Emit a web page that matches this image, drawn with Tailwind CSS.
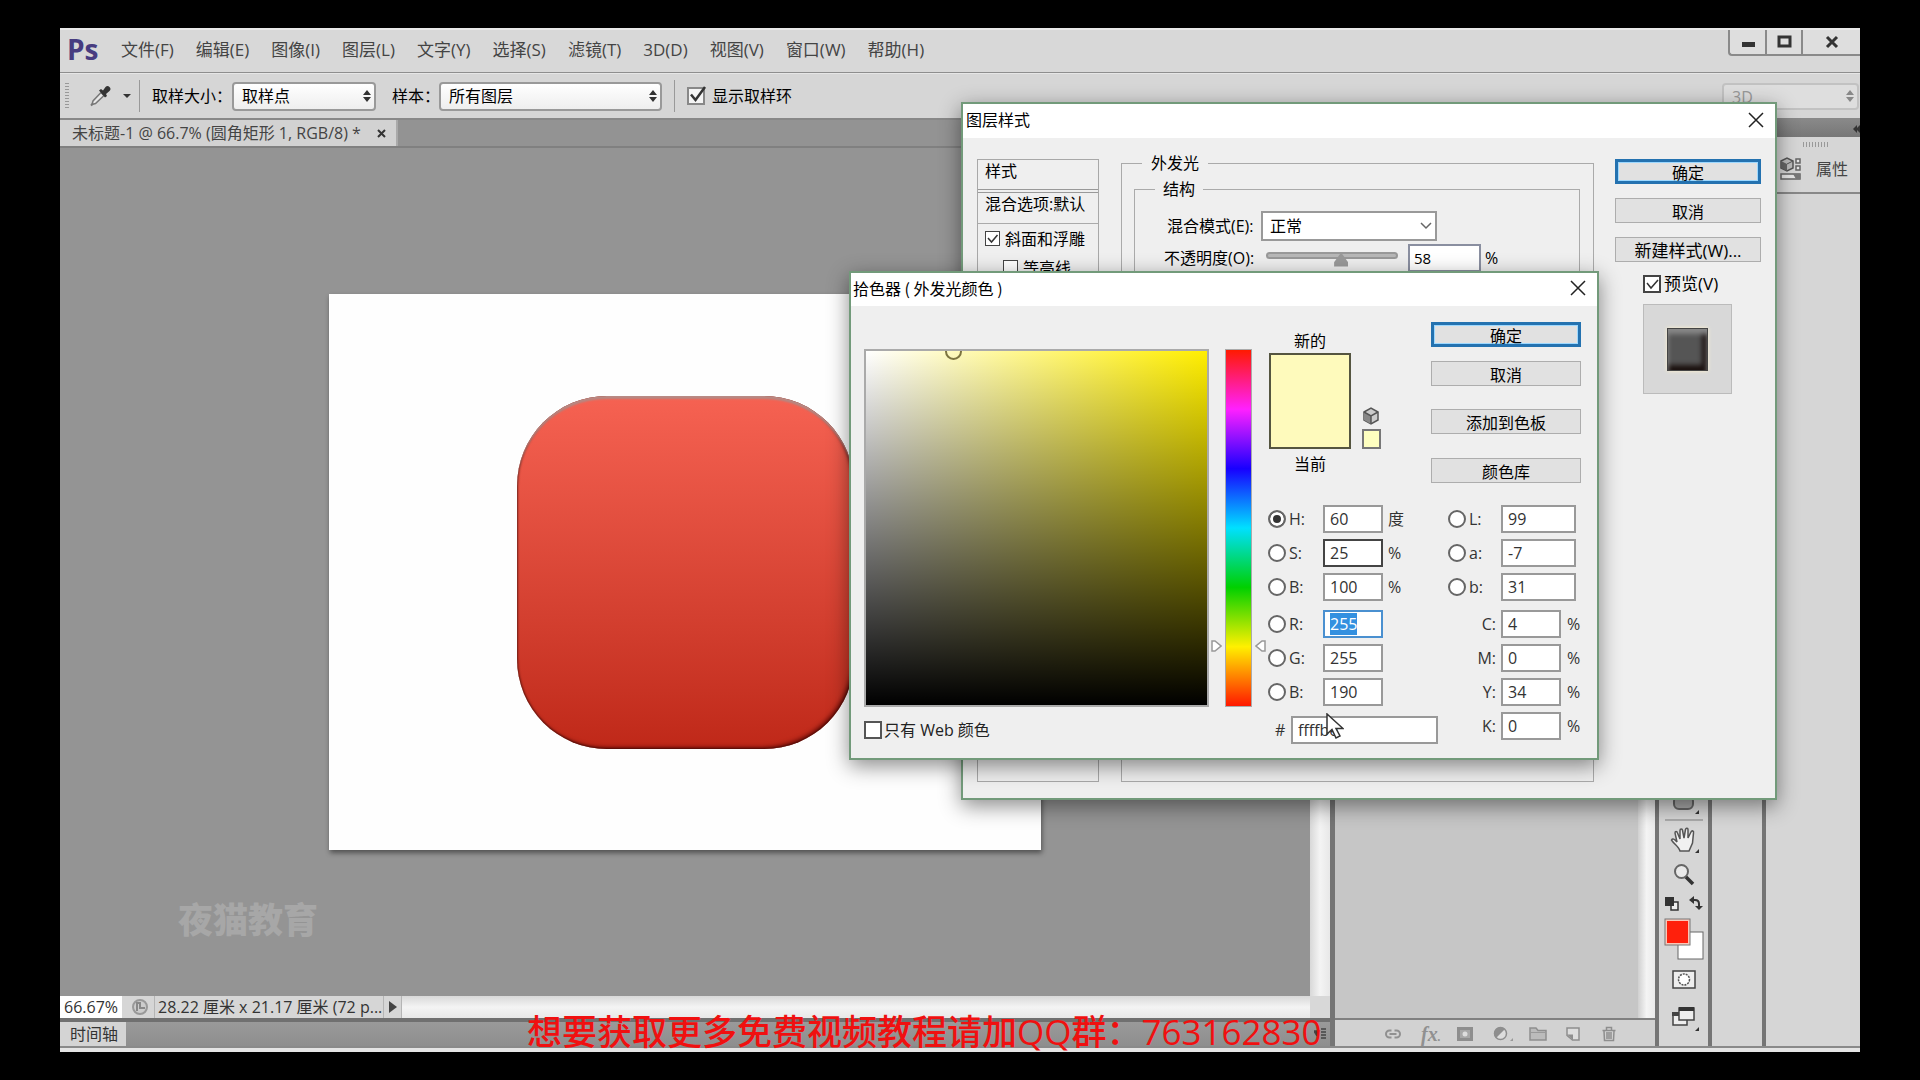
<!DOCTYPE html>
<html lang="zh-CN">

<head>
  <meta charset="UTF-8" />
  <meta name="viewport" content="width=device-width, initial-scale=1.0" />
  <title>Photoshop - 拾色器</title>
  <script src="https://cdn.jsdelivr.net/npm/@tailwindcss/browser@4"></script>
</head>

<body class="h-screen overflow-hidden bg-black px-[60px] py-7 font-['Open_Sans','Noto_Sans_CJK_SC',sans-serif] text-base leading-6 text-[#222]">

  <div class="relative flex h-full flex-col bg-[#d6d6d6]">

    <!-- Menu -->
    <header class="flex h-[45px] items-center border-t-2 border-b border-t-[#e8e8e8] border-b-[#8e8e8e] bg-[#d8d8d8] pl-[7px]">
      <span class="w-[54px] pb-1 text-[28px] leading-8 font-bold text-[#473c80]">Ps</span>
      <nav class="flex flex-1 gap-[22px] pb-[3px] text-[17px] whitespace-nowrap text-[#444]">
        <button>文件(F)</button>
        <button>编辑(E)</button>
        <button>图像(I)</button>
        <button>图层(L)</button>
        <button>文字(Y)</button>
        <button>选择(S)</button>
        <button>滤镜(T)</button>
        <button>3D(D)</button>
        <button>视图(V)</button>
        <button>窗口(W)</button>
        <button>帮助(H)</button>
      </nav>
      <div class="flex h-[26px] self-start rounded-bl border-b-2 border-l-2 border-[#8a8a8a] bg-[#dedede]">
        <button class="grid w-[37px] place-items-center border-r-2 border-[#8a8a8a]" aria-label="最小化">
          <svg class="h-4 w-4" viewBox="0 0 16 16"><rect x="2" y="8" width="13" height="5" fill="#333" /></svg>
        </button>
        <button class="grid w-9 place-items-center border-r-2 border-[#8a8a8a]" aria-label="最大化">
          <svg class="h-4 w-4" viewBox="0 0 16 16"><rect x="3" y="3" width="11" height="9" fill="none" stroke="#333" stroke-width="3" /></svg>
        </button>
        <button class="grid w-[57px] place-items-center" aria-label="关闭">
          <svg class="h-4 w-4" viewBox="0 0 16 16"><path d="M3 3l10 10M13 3L3 13" stroke="#333" stroke-width="3" /></svg>
        </button>
      </div>
    </header>

    <!-- Options bar -->
    <section class="flex h-[47px] items-center border-t border-b-2 border-t-[#e6e6e6] border-b-[#888] bg-[#d6d6d6] pl-[5px] text-black">
      <div class="h-[26px] w-1 bg-[repeating-linear-gradient(to_bottom,#999_0_1px,transparent_1px_3px)]"></div>
      <svg class="ml-5 h-[22px] w-[22px]" viewBox="0 0 22 22">
        <path d="M3 19.500L4 16 12 7.500 15 10.500 6.500 18.500Z" fill="#e8e8e8" stroke="#777" stroke-width="1.500" />
        <path d="M2 20.500l2-2" stroke="#777" stroke-width="2" />
        <path d="M10 5.500l2-1.500 2 1.500L16.500 2q2-2 4 0t0 4L17 9l1 2-2 1.500Z" fill="#333" />
      </svg>
      <svg class="ml-3 h-2 w-2" viewBox="0 0 8 8"><path d="M0 2h8L4 6Z" fill="#333" /></svg>
      <div class="ml-2 h-8 w-px bg-[#999]"></div>
      <label for="size" class="ml-3 w-20">取样大小：</label>
      <span class="grid items-center">
        <select id="size" class="col-start-1 row-start-1 h-[29px] w-[144px] appearance-none rounded border-2 border-[#999] bg-linear-to-b from-white to-[#eee] px-2 leading-6">
          <option>取样点</option>
        </select>
        <svg class="pointer-events-none col-start-1 row-start-1 mr-[5px] h-3 w-2 justify-self-end" viewBox="0 0 8 12"><path d="M0 5L4 0l4 5ZM0 7h8l-4 5Z" fill="#333" /></svg>
      </span>
      <label for="sample" class="ml-4 w-[47px] whitespace-nowrap">样本：</label>
      <span class="grid items-center">
        <select id="sample" class="col-start-1 row-start-1 h-[29px] w-[223px] appearance-none rounded border-2 border-[#999] bg-linear-to-b from-white to-[#eee] px-2 leading-6">
          <option>所有图层</option>
        </select>
        <svg class="pointer-events-none col-start-1 row-start-1 mr-[5px] h-3 w-2 justify-self-end" viewBox="0 0 8 12"><path d="M0 5L4 0l4 5ZM0 7h8l-4 5Z" fill="#333" /></svg>
      </span>
      <div class="ml-3 h-8 w-px bg-[#999]"></div>
      <label class="ml-3 flex flex-1 items-center gap-[7px]">
        <span class="grid">
          <input type="checkbox" checked class="col-start-1 row-start-1 h-[18px] w-[18px] appearance-none border-2 border-[#888] bg-[#f4f4f4]" />
          <svg class="pointer-events-none col-start-1 row-start-1 h-[18px] w-[18px] overflow-visible" viewBox="0 0 18 18"><path d="M4 7.500L8.500 13 18 0" fill="none" stroke="#333" stroke-width="2.500" /></svg>
        </span>
        显示取样环
      </label>
      <span class="mr-px grid items-center">
        <select aria-label="工作区" class="col-start-1 row-start-1 h-[27px] w-[137px] appearance-none rounded border-2 border-[#c2c2c2] bg-[#dedede] px-2 leading-6 text-[#999]">
          <option>3D</option>
        </select>
        <svg class="pointer-events-none col-start-1 row-start-1 mr-[5px] h-3 w-2 justify-self-end" viewBox="0 0 8 12"><path d="M0 5L4 0l4 5ZM0 7h8l-4 5Z" fill="#888" /></svg>
      </span>
    </section>

    <!-- Workspace -->
    <main class="flex min-h-0 flex-1">

      <!-- Document -->
      <section class="flex min-w-0 flex-1 flex-col">
        <div class="flex h-7 border-b-2 border-[#808080] bg-[#939393]">
          <div class="flex items-center gap-4 border-r-2 border-[#aaa] bg-[#d2d2d2] pr-[10px] pl-3 text-[#444]">
            <span class="whitespace-nowrap">未标题-1 @ 66.7% (圆角矩形 1, RGB/8) *</span>
            <button aria-label="关闭文档">
              <svg class="h-[9px] w-[9px]" viewBox="0 0 9 9"><path d="M1 1l7 7M8 1L1 8" stroke="#333" stroke-width="2" /></svg>
            </button>
          </div>
        </div>

        <div class="flex min-h-0 flex-1">
          <div class="relative flex flex-1 items-center justify-center bg-[#949494]">
            <div class="flex h-[556px] w-[712px] items-center justify-center bg-[#fefefe] shadow-[1px_3px_5px_rgba(0,0,0,0.45)]">
              <div class="h-[353px] w-[337px] rounded-[90px] bg-linear-to-b from-[#f66252] to-[#bf2818] shadow-[inset_0_4px_2px_-1px_#b98a84,inset_0_0_2px_1px_rgba(60,10,5,0.7),inset_-3px_-3px_4px_-1px_rgba(70,0,0,0.6)]"></div>
            </div>
            <span class="absolute bottom-[48px] left-[118px] text-[35px] leading-[56px] font-black text-[#a7a7a7]">夜猫教育</span>
          </div>
          <div class="w-5 bg-linear-to-r from-[#d8d8d8] via-[#f4f4f4] to-[#e8e8e8]"></div>
        </div>

        <!-- Status bar -->
        <div class="flex h-[22px] items-center bg-[#d6d6d6] text-[15px] leading-[22px] whitespace-nowrap text-[#333]">
          <input aria-label="缩放" value="66.67%" class="h-full w-[62px] bg-white px-1 text-base" />
          <svg class="mr-[6px] ml-[10px] h-4 w-4" viewBox="0 0 16 16">
            <circle cx="8" cy="8" r="7" fill="#ccc" stroke="#999" stroke-width="2" />
            <path d="M5 12V4h3v5h5" fill="none" stroke="#888" stroke-width="2" />
          </svg>
          <span class="w-[230px] overflow-hidden border-r border-l border-[#b5b5b5] pl-[3px] text-base leading-[22px]">28.22 厘米 x 21.17 厘米 (72 p...</span>
          <button class="grid h-full w-[18px] place-items-center border-r border-[#b5b5b5]" aria-label="状态选项">
            <svg class="h-3 w-2" viewBox="0 0 8 12"><path d="M0 0l8 6-8 6Z" fill="#444" /></svg>
          </button>
          <div class="h-full flex-1 bg-linear-to-b from-[#d8d8d8] via-[#f4f4f4] to-[#e8e8e8]"></div>
          <div class="h-full w-5 bg-[#d8d8d8]"></div>
        </div>

        <!-- Timeline -->
        <div class="flex h-7 items-center border-t-4 border-[#707070] bg-linear-to-b from-[#9a9a9a] to-[#8e8e8e]">
          <div class="flex h-6 w-[66px] items-center bg-[#d4d4d4] pl-[10px] text-[#333]">时间轴</div>
          <svg class="mr-1 ml-auto h-3 w-3" viewBox="0 0 12 12"><path d="M0 3h5L2.500 7ZM7 1h5M7 4h5M7 7h5M7 10h5" fill="#444" stroke="#444" stroke-width="1.500" /></svg>
        </div>
      </section>

      <div class="w-[5px] bg-[#757575]"></div>

      <!-- Layers -->
      <section class="flex w-[320px] flex-col">
        <div class="flex flex-1">
          <div class="flex-1 bg-[#c6c6c6]"></div>
          <div class="w-[17px] bg-linear-to-r from-[#d0d0d0] via-[#f4f4f4] to-[#eaeaea]"></div>
        </div>
        <div class="flex h-7 items-center border-t-2 border-[#808080] bg-[#d2d2d2] pt-[2px] pl-[49px] text-[#909090]">
          <button class="w-[37px]" aria-label="链接图层">
            <svg class="h-4 w-[18px]" viewBox="0 0 17 16" fill="none" stroke="currentColor" stroke-width="2"><path d="M7 4.500H5a3.500 3.500 0 000 7h2M10 4.500h2a3.500 3.500 0 010 7h-2M5 8h7" /></svg>
          </button>
          <button class="w-9 text-left font-['Liberation_Serif',serif] text-[20px] leading-5 font-bold italic" aria-label="图层样式">fx<span class="text-xs">.</span></button>
          <button class="w-9" aria-label="图层蒙版">
            <svg class="h-4 w-4" viewBox="0 0 16 16"><rect x="0" y="1" width="16" height="14" fill="#8e8e8e" /><rect x="3" y="4" width="10" height="8" fill="#a8a8a8" /><circle cx="8" cy="8" r="2.500" fill="#ddd" /></svg>
          </button>
          <button class="w-9" aria-label="调整图层">
            <svg class="h-4 w-[20px]" viewBox="0 0 20 16"><circle cx="7.500" cy="7.500" r="6" fill="#ddd" stroke="#8e8e8e" stroke-width="1.500" /><path d="M3 12A6 6 0 0112 3Z" fill="#8e8e8e" /><path d="M17 15h3v-3Z" fill="#999" /></svg>
          </button>
          <button class="w-9" aria-label="新建组">
            <svg class="h-4 w-[18px]" viewBox="0 0 18 16"><path d="M1 14V2h6l2 2.500h8V14Z" fill="#bbb" stroke="#8e8e8e" stroke-width="1.500" /><path d="M1.500 6.500h15" stroke="#999" /></svg>
          </button>
          <button class="w-9" aria-label="新建图层">
            <svg class="h-4 w-4" viewBox="0 0 16 16"><path d="M2 2h12v12H7.500L2 9.500Z" fill="#ddd" stroke="#8e8e8e" stroke-width="1.500" /><path d="M2 8.500h6V14Z" fill="#8e8e8e" /></svg>
          </button>
          <button aria-label="删除图层">
            <svg class="h-4 w-4" viewBox="0 0 16 16" fill="none" stroke="#8e8e8e" stroke-width="1.500"><path d="M1.500 4.500h13M5.500 4V1.500h5V4M3 5l.500 9.500h9L13 5M6 6v7M8 6v7M10 6v7" /></svg>
          </button>
        </div>
      </section>

      <div class="w-1 bg-[#757575]"></div>

      <!-- Tools -->
      <aside class="flex w-[49px] flex-col items-center justify-end pb-[14px]">
        <button aria-label="圆角矩形工具">
          <svg class="h-6 w-[32px]" viewBox="0 0 32 24"><rect x="6" y="4" width="19" height="13" rx="5" fill="#aaa" stroke="#666" stroke-width="2" /><path d="M31 18v4h-4Z" fill="#333" /></svg>
        </button>
        <div class="mt-[3px] h-[2px] w-[38px] bg-[#aaa]"></div>
        <button class="mt-[6px]" aria-label="抓手工具">
          <svg class="h-7 w-[32px]" viewBox="0 0 32 28">
            <path d="M12 24c-1-4-6-7-8.500-11 1-2 3-1 5.500 2L7 6c0-2 2-2 2.500 0L12 12 12 3.500c0-2 2.500-2 2.500 0L16 11 17.500 2.500c.500-2 2.500-1.500 2.500 0L20 11 23 5c1-2 3-1 2.500 1L24.500 16 21 24Z" fill="#f1f1f1" stroke="#555" stroke-width="1.500" />
            <path d="M31 22v4h-4Z" fill="#333" />
          </svg>
        </button>
        <button class="mt-2" aria-label="缩放工具">
          <svg class="h-6 w-[22px]" viewBox="0 0 22 24"><circle cx="8.500" cy="8.500" r="6.500" fill="#e9e9e9" stroke="#666" stroke-width="2" /><path d="M13 14l7 7" stroke="#333" stroke-width="3.500" /></svg>
        </button>
        <div class="mt-[9px] flex w-[38px] justify-between">
          <button aria-label="默认颜色">
            <svg class="h-4 w-[14px]" viewBox="0 0 14 16"><rect x="6" y="6" width="7" height="8" fill="#eee" stroke="#333" stroke-width="1.500" /><path d="M0 1h9v9H0Z" fill="#333" /></svg>
          </button>
          <button aria-label="切换颜色">
            <svg class="h-4 w-[14px]" viewBox="0 0 14 16"><path d="M3 4h3q4 0 4 4v3" fill="none" stroke="#333" stroke-width="2" /><path d="M5 0v8L0 4ZM6 10h8l-4 4Z" fill="#333" /></svg>
          </button>
        </div>
        <!-- Foreground / background colour -->
        <button class="mt-[6px]" aria-label="前景色">
          <svg class="h-[42px] w-10" viewBox="0 0 40 42"><rect x="14" y="14" width="25" height="27" fill="#fff" stroke="#666" /><rect x="1" y="1" width="25" height="26" fill="#fbc7b8" stroke="#777" /><rect x="3" y="3" width="21" height="22" fill="#ff200c" /></svg>
        </button>
        <button class="mt-[10px]" aria-label="快速蒙版">
          <svg class="h-[19px] w-[24px]" viewBox="0 0 24 19"><rect x="1" y="1" width="22" height="17" fill="#eee" stroke="#444" stroke-width="1.500" /><circle cx="12" cy="9.500" r="5.500" fill="#fff" stroke="#555" stroke-width="1.500" stroke-dasharray="2 1" /></svg>
        </button>
        <button class="mt-[17px]" aria-label="屏幕模式">
          <svg class="h-[26px] w-[32px]" viewBox="0 0 32 26"><rect x="5" y="7" width="14" height="12" fill="#eee" stroke="#444" stroke-width="1.500" /><path d="M4 6h14v4H4Z" fill="#444" /><rect x="11" y="2" width="15" height="12" fill="#eee" stroke="#444" stroke-width="1.500" /><path d="M11 1h15v4H11Z" fill="#333" /><path d="M31 21v4h-4Z" fill="#333" /></svg>
        </button>
      </aside>

      <div class="w-1 bg-[#757575]"></div>
      <div class="w-[50px]"></div>
      <div class="w-1 bg-[#757575]"></div>

      <!-- Properties -->
      <aside class="w-[94px]">
        <div class="flex h-[17px] items-center justify-end bg-linear-to-b from-[#888] to-[#777]">
          <svg class="h-2 w-[7px]" viewBox="0 0 7 8"><path d="M0 4l4-4v8ZM3 4l4-4v8Z" fill="#333" /></svg>
        </div>
        <div class="flex h-[57px] flex-col border-b-2 border-[#888] pt-[5px]">
          <div class="mr-[30px] h-[5px] w-[27px] self-end bg-[repeating-linear-gradient(to_right,#999_0_1px,transparent_1px_3px)]"></div>
          <button class="mt-[10px] mr-3 flex items-center gap-[14px] self-end text-[#444]">
            <svg class="h-6 w-[22px]" viewBox="0 0 22 24">
              <path d="M1 4l6-3 6 3v7l-6 3-6-3Z" fill="#bbb" stroke="#555" stroke-width="1.500" />
              <path d="M1 4l6 3v7l-6-3Z" fill="#666" /><path d="M7 7l6-3" stroke="#555" />
              <path d="M16 2h4v4h-4ZM16 9h4v4h-4ZM1 17h19v5H1Z" fill="#e6e6e6" stroke="#666" stroke-width="1.500" /><path d="M13 17h7v5h-4Z" fill="#777" />
            </svg>
            属性
          </button>
        </div>
      </aside>
    </main>

    <div class="h-[6px] border-t-2 border-[#8a8a8a] bg-[#e4e4e4]"></div>

    <!-- Layer style window -->
    <section class="absolute top-[74px] left-[901px] flex h-[698px] w-[816px] flex-col border-2 border-[#729a7a] bg-[#efefef] text-black shadow-[0_6px_20px_rgba(0,0,0,0.45)]">
      <div class="flex h-[34px] items-center justify-between bg-white pr-[11px] pb-[2px] pl-[3px]">
        <h2>图层样式</h2>
        <button aria-label="关闭"><svg class="h-4 w-4" viewBox="0 0 16 16"><path d="M1 1l14 14M15 1L1 15" stroke="#222" stroke-width="1.500" /></svg></button>
      </div>
      <div class="flex flex-1 pt-[21px] pr-[14px] pb-4 pl-[14px]">
        <div class="w-[122px] border border-[#a8a8a8]">
          <div class="h-[33px] border-b-4 border-double border-[#999] pl-[7px] leading-[22px]">样式</div>
          <div class="h-[31px] border-b border-[#aaa] pl-[7px] leading-[22px]">混合选项:默认</div>
          <label class="flex h-[29px] items-center gap-[5px] pl-[7px]">
            <span class="grid">
              <input type="checkbox" checked class="col-start-1 row-start-1 h-[15px] w-[15px] appearance-none border border-[#444] bg-white" />
              <svg class="pointer-events-none col-start-1 row-start-1 h-[15px] w-[15px]" viewBox="0 0 15 15"><path d="M3 7l3.500 4L12.500 4" fill="none" stroke="#333" stroke-width="1.500" /></svg>
            </span>
            斜面和浮雕
          </label>
          <label class="flex h-[29px] items-center gap-[5px] pl-[25px]">
            <input type="checkbox" class="h-[15px] w-[15px] appearance-none border border-[#444] bg-white" />
            等高线
          </label>
        </div>
        <fieldset class="mt-[-8px] ml-[22px] w-[473px] border border-[#aaa] pl-3">
          <legend class="ml-2 px-[9px]">外发光</legend>
          <fieldset class="mt-[2px] mr-[13px] h-[500px] border border-[#aaa] pl-[29px]">
            <legend class="ml-[-9px] px-2">结构</legend>
            <div class="mt-[10px] flex items-center">
              <label for="mode" class="w-[97px] pl-[3px]">混合模式(E):</label>
              <span class="grid items-center">
                <select id="mode" class="col-start-1 row-start-1 h-[30px] w-[176px] appearance-none border-2 border-[#999] bg-white px-[7px] leading-6">
                  <option>正常</option>
                </select>
                <svg class="pointer-events-none col-start-1 row-start-1 mr-[5px] h-2 w-3 justify-self-end" viewBox="0 0 12 8"><path d="M1 1l5 5 5-5" fill="none" stroke="#666" stroke-width="1.500" /></svg>
              </span>
            </div>
            <div class="mt-[3px] flex items-center">
              <label for="opacity" class="w-[102px]">不透明度(O):</label>
              <input id="opacity" type="range" min="0" max="100" value="58" class="mb-[5px] h-[7px] w-[132px] appearance-none rounded border-2 border-[#999] bg-[#b8b8b8] [&::-webkit-slider-thumb]:mt-2 [&::-webkit-slider-thumb]:h-[14px] [&::-webkit-slider-thumb]:w-[14px] [&::-webkit-slider-thumb]:appearance-none [&::-webkit-slider-thumb]:bg-[#999] [&::-webkit-slider-thumb]:[clip-path:polygon(50%_0,100%_70%,100%_100%,0_100%,0_70%)]" />
              <input aria-label="不透明度" value="58" class="mr-1 ml-[10px] h-7 w-[73px] border-2 border-[#8a8fa0] bg-white px-1 text-[15px]" />
              %
            </div>
          </fieldset>
        </fieldset>
        <div class="ml-auto flex w-[146px] flex-col">
          <button class="h-[25px] border-[3px] border-[#2472b0] bg-[#e1e1e1] leading-[22px] shadow-[inset_0_0_0_1px_#9cd8ff]">确定</button>
          <button class="mt-[14px] h-[25px] border border-[#adadad] bg-[#e1e1e1] leading-[27px]">取消</button>
          <button class="mt-[14px] h-[25px] border border-[#adadad] bg-[#e1e1e1] text-[17px] leading-[25px]">新建样式(W)...</button>
          <label class="mt-[10px] flex h-6 items-center gap-[3px] pl-7 text-[17px]">
            <span class="grid">
              <input type="checkbox" checked class="col-start-1 row-start-1 h-[18px] w-[18px] appearance-none border-2 border-[#444] bg-white" />
              <svg class="pointer-events-none col-start-1 row-start-1 h-[18px] w-[18px]" viewBox="0 0 18 18"><path d="M4 8l4 5 7-8" fill="none" stroke="#333" stroke-width="1.500" /></svg>
            </span>
            预览(V)
          </label>
          <div class="mt-2 ml-7 grid h-[90px] w-[89px] place-items-center border border-[#bbb] bg-[#d8d8d8]">
            <div class="h-[43px] w-[41px] border border-[#444] bg-[#555] shadow-[inset_0_5px_5px_#888,inset_-5px_-5px_5px_#1c1210,0_0_4px_#fff3cf]"></div>
          </div>
        </div>
      </div>
    </section>

    <!-- Colour picker window -->
    <section class="absolute top-[243px] left-[789px] flex h-[489px] w-[750px] flex-col border-2 border-[#729a7a] bg-[#efefef] text-black shadow-[0_6px_20px_rgba(0,0,0,0.45)]">
      <div class="flex h-[33px] items-center justify-between bg-white pr-[11px] pb-1 pl-[2px]">
        <h2 class="font-['Noto_Sans_CJK_SC',sans-serif]">拾色器 ( 外发光颜色 )</h2>
        <button aria-label="关闭"><svg class="h-4 w-4" viewBox="0 0 16 16"><path d="M1 1l14 14M15 1L1 15" stroke="#222" stroke-width="1.500" /></svg></button>
      </div>

      <div class="flex flex-1 pr-4 pl-[13px]">
        <div class="pt-[43px]">
          <div class="relative h-[358px] w-[345px] overflow-hidden border-2 border-[#aaa] bg-[linear-gradient(to_top,black,transparent),linear-gradient(to_right,white,#ffee00)]">
            <div class="absolute -top-2 left-[79px] h-[17px] w-[17px] rounded-full border-2 border-[#7c7440]"></div>
          </div>
          <label class="mt-[11px] flex items-center gap-[2px] text-[#222]">
            <input type="checkbox" class="h-[18px] w-[18px] appearance-none border-2 border-[#555] bg-white" />
            只有 Web 颜色
          </label>
        </div>

        <div class="ml-4 pt-[43px]">
          <div class="relative h-[358px] w-[27px] border border-[#aaa] bg-[linear-gradient(to_bottom,#ff1a00,#ff20ff,#1800ff,#00e0ff,#00d000,#fff000,#ff1800)]">
            <svg class="absolute top-[290px] -left-[16px] h-3 w-3" viewBox="0 0 12 12"><path d="M2 1h3l6 5-6 5H2Z" fill="#fff" stroke="#999" stroke-width="1.500" /></svg>
            <svg class="absolute top-[290px] -right-[16px] h-3 w-3" viewBox="0 0 12 12"><path d="M10 1H7L1 6l6 5h3Z" fill="#fff" stroke="#999" stroke-width="1.500" /></svg>
          </div>
        </div>

        <div class="ml-4 flex-1 pt-4">
          <div class="flex pl-px">
            <div class="flex w-[82px] flex-col items-center pt-[7px]">
              <span>新的</span>
              <div class="h-[96px] w-[82px] border-2 border-[#555540] bg-[#fefabc]"></div>
              <span class="mt-[3px]">当前</span>
            </div>
            <div class="ml-[11px] pt-[85px]">
              <svg class="h-[18px] w-[18px]" viewBox="0 0 18 18"><path d="M2 5l7-4 7 4v8l-7 4-7-4Z" fill="#ccc" stroke="#555" stroke-width="1.500" /><path d="M2 5l7 4v8l-7-4Z" fill="#888" /><path d="M2 5l7 4 7-4M9 9v8" fill="none" stroke="#555" stroke-width="1.500" /></svg>
              <div class="mt-1 h-5 w-[19px] border-2 border-[#777] bg-[#feffc0]"></div>
            </div>
            <div class="ml-auto flex w-[150px] flex-col">
              <button class="h-[25px] border-[3px] border-[#2472b0] bg-[#e1e1e1] leading-[22px] shadow-[inset_0_0_0_1px_#9cd8ff]">确定</button>
              <button class="mt-[14px] h-[25px] border border-[#adadad] bg-[#e1e1e1] leading-[27px]">取消</button>
              <button class="mt-[23px] h-[25px] border border-[#adadad] bg-[#e1e1e1] leading-[27px]">添加到色板</button>
              <button class="mt-6 h-[25px] border border-[#adadad] bg-[#e1e1e1] leading-[27px]">颜色库</button>
            </div>
          </div>

          <div class="mt-[22px] flex justify-between text-[#333]">
            <div>
              <!-- HSB -->
              <div class="flex flex-col gap-[6px]">
                <div class="flex h-7 items-center">
                  <label class="flex w-[55px] items-center gap-[3px]"><input type="radio" name="channel" checked class="h-[18px] w-[18px] appearance-none rounded-full border-2 border-[#666] bg-white checked:bg-[#333] checked:shadow-[inset_0_0_0_3px_#fff]" />H:</label>
                  <input aria-label="H" value="60" class="mr-[5px] h-7 w-[60px] border-2 border-[#999] bg-white px-[5px]" />度
                </div>
                <div class="flex h-7 items-center">
                  <label class="flex w-[55px] items-center gap-[3px]"><input type="radio" name="channel" class="h-[18px] w-[18px] appearance-none rounded-full border-2 border-[#666] bg-white checked:bg-[#333] checked:shadow-[inset_0_0_0_3px_#fff]" />S:</label>
                  <input aria-label="S" value="25" class="mr-[5px] h-7 w-[60px] border-2 border-[#444] bg-white px-[5px]" />%
                </div>
                <div class="flex h-7 items-center">
                  <label class="flex w-[55px] items-center gap-[3px]"><input type="radio" name="channel" class="h-[18px] w-[18px] appearance-none rounded-full border-2 border-[#666] bg-white checked:bg-[#333] checked:shadow-[inset_0_0_0_3px_#fff]" />B:</label>
                  <input aria-label="B" value="100" class="mr-[5px] h-7 w-[60px] border-2 border-[#999] bg-white px-[5px]" />%
                </div>
              </div>
              <!-- RGB -->
              <div class="mt-[9px] flex flex-col gap-[6px]">
                <div class="flex h-7 items-center">
                  <label class="flex w-[55px] items-center gap-[3px]"><input type="radio" name="channel" class="h-[18px] w-[18px] appearance-none rounded-full border-2 border-[#666] bg-white checked:bg-[#333] checked:shadow-[inset_0_0_0_3px_#fff]" />R:</label>
                  <input id="red" aria-label="R" value="255" class="h-7 w-[60px] border-2 border-[#4a90d0] bg-white px-[5px] outline-none selection:bg-[#3390e0] selection:text-white" />
                </div>
                <div class="flex h-7 items-center">
                  <label class="flex w-[55px] items-center gap-[3px]"><input type="radio" name="channel" class="h-[18px] w-[18px] appearance-none rounded-full border-2 border-[#666] bg-white checked:bg-[#333] checked:shadow-[inset_0_0_0_3px_#fff]" />G:</label>
                  <input aria-label="G" value="255" class="h-7 w-[60px] border-2 border-[#999] bg-white px-[5px]" />
                </div>
                <div class="flex h-7 items-center">
                  <label class="flex w-[55px] items-center gap-[3px]"><input type="radio" name="channel" class="h-[18px] w-[18px] appearance-none rounded-full border-2 border-[#666] bg-white checked:bg-[#333] checked:shadow-[inset_0_0_0_3px_#fff]" />B:</label>
                  <input aria-label="B" value="190" class="h-7 w-[60px] border-2 border-[#999] bg-white px-[5px]" />
                </div>
              </div>
              <div class="mt-[10px] flex h-7 items-center pl-[7px]">
                <label for="hex" class="w-4">#</label>
                <input id="hex" value="ffffbe" class="h-7 w-[147px] border-2 border-[#999] bg-white px-[5px]" />
              </div>
            </div>

            <div class="w-[133px]">
              <!-- Lab -->
              <div class="flex flex-col gap-[6px]">
                <div class="flex h-7 items-center">
                  <label class="flex w-[53px] items-center gap-[3px]"><input type="radio" name="channel" class="h-[18px] w-[18px] appearance-none rounded-full border-2 border-[#666] bg-white checked:bg-[#333] checked:shadow-[inset_0_0_0_3px_#fff]" />L:</label>
                  <input aria-label="L" value="99" class="h-7 w-[75px] border-2 border-[#999] bg-white px-[5px]" />
                </div>
                <div class="flex h-7 items-center">
                  <label class="flex w-[53px] items-center gap-[3px]"><input type="radio" name="channel" class="h-[18px] w-[18px] appearance-none rounded-full border-2 border-[#666] bg-white checked:bg-[#333] checked:shadow-[inset_0_0_0_3px_#fff]" />a:</label>
                  <input aria-label="a" value="-7" class="h-7 w-[75px] border-2 border-[#999] bg-white px-[5px]" />
                </div>
                <div class="flex h-7 items-center">
                  <label class="flex w-[53px] items-center gap-[3px]"><input type="radio" name="channel" class="h-[18px] w-[18px] appearance-none rounded-full border-2 border-[#666] bg-white checked:bg-[#333] checked:shadow-[inset_0_0_0_3px_#fff]" />b:</label>
                  <input aria-label="b" value="31" class="h-7 w-[75px] border-2 border-[#999] bg-white px-[5px]" />
                </div>
              </div>
              <!-- CMYK -->
              <div class="mt-[9px] flex flex-col gap-[6px]">
                <div class="flex h-7 items-center">
                  <label for="cyan" class="w-[53px] pr-[5px] text-right">C:</label>
                  <input id="cyan" value="4" class="mr-[6px] h-7 w-[60px] border-2 border-[#999] bg-white px-[5px]" />%
                </div>
                <div class="flex h-7 items-center">
                  <label for="magenta" class="w-[53px] pr-[5px] text-right">M:</label>
                  <input id="magenta" value="0" class="mr-[6px] h-7 w-[60px] border-2 border-[#999] bg-white px-[5px]" />%
                </div>
                <div class="flex h-7 items-center">
                  <label for="yellow" class="w-[53px] pr-[5px] text-right">Y:</label>
                  <input id="yellow" value="34" class="mr-[6px] h-7 w-[60px] border-2 border-[#999] bg-white px-[5px]" />%
                </div>
                <div class="flex h-7 items-center">
                  <label for="black" class="w-[53px] pr-[5px] text-right">K:</label>
                  <input id="black" value="0" class="mr-[6px] h-7 w-[60px] border-2 border-[#999] bg-white px-[5px]" />%
                </div>
              </div>
            </div>
          </div>
        </div>
      </div>
    </section>

    <!-- Mouse pointer -->
    <svg class="absolute top-[685px] left-[1266px] h-7 w-[18px]" viewBox="0 0 18 28"><path d="M1 1v20l5-4.500 4 8.500 4-2-4-7.500h7Z" fill="#fff" stroke="#333" stroke-width="1.500" /></svg>

    <!-- Banner -->
    <p class="absolute -bottom-[6px] left-[467px] text-[35px] leading-[52px] font-medium whitespace-nowrap text-[#f01010]">想要获取更多免费视频教程请加QQ群：763162830</p>
  </div>

  <script>
    document.getElementById('red').select();
  </script>
</body>

</html>
